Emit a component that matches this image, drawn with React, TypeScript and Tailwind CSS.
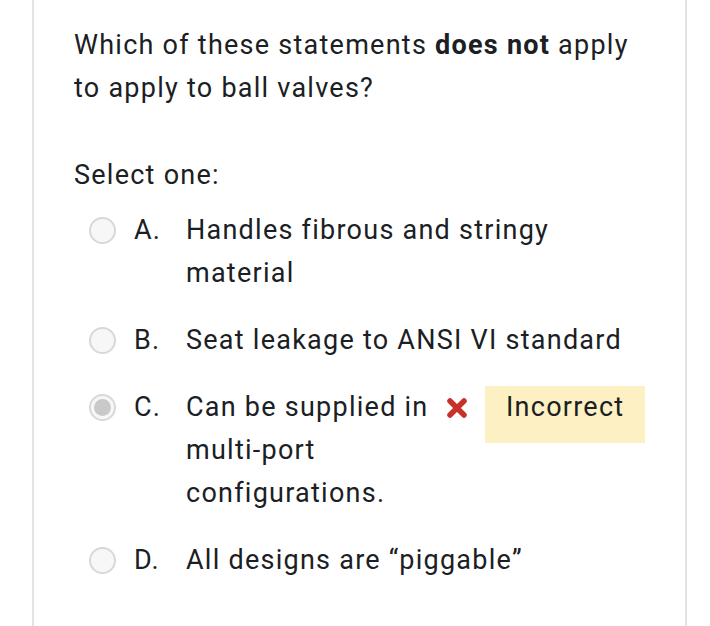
import React from "react";

function Radio({ checked }: { checked?: boolean }) {
  return (
    <div className="w-[27px] h-[27px] rounded-full border-2 border-[#d8d8d8] bg-[#f7f7f7] flex items-center justify-center shrink-0">
      {checked && <div className="w-[17px] h-[17px] rounded-full bg-[#c9c9c9]" />}
    </div>
  );
}

function Option({
  letter,
  children,
  checked,
  extra,
  textClass,
}: {
  letter: string;
  children: React.ReactNode;
  checked?: boolean;
  extra?: React.ReactNode;
  textClass?: string;
}) {
  return (
    <div className="flex items-start py-3">
      <div className="h-[43px] flex items-center w-[61px] pl-[16px] shrink-0">
        <Radio checked={checked} />
      </div>
      <div className="w-[52px] shrink-0">{letter}</div>
      <div className={textClass ?? "flex-1"}>{children}</div>
      {extra}
    </div>
  );
}

export default function App() {
  return (
    <div
      className="w-[710px] h-[626px] bg-white overflow-hidden text-[#1a2023]"
      style={{ fontFamily: "Roboto, 'Liberation Sans', sans-serif" }}
    >
      <div className="ml-[32px] w-[655px] h-full border-x-2 border-[#e3e3e3] pt-[24px] pl-[40px] pr-[30px] text-[27px] leading-[43px] tracking-[1.25px]">
        <p>
          Which of these statements <b className="font-bold">does not</b> apply to apply to ball valves?
        </p>
        <p className="mt-[44px]">Select one:</p>
        <div className="-ml-[1px]">
          <Option letter="A.">Handles fibrous and stringy material</Option>
          <Option letter="B.">Seat leakage to ANSI VI standard</Option>
          <Option
            letter="C."
            checked
            textClass="w-[252px] shrink-0"
            extra={
              <>
                <div className="h-[43px] flex items-center ml-[8px] shrink-0">
                  <svg width="22" height="22" viewBox="0 0 22 22">
                    <path d="M4 4 L18 18 M18 4 L4 18" stroke="#c8302a" strokeWidth="5.5" strokeLinecap="round" />
                  </svg>
                </div>
                <div className="ml-[17px] bg-[#fdf0c2] px-[21px] pb-[14px] shrink-0">Incorrect</div>
              </>
            }
          >
            Can be supplied in multi-port configurations.
          </Option>
          <Option letter="D.">All designs are “piggable”</Option>
        </div>
      </div>
    </div>
  );
}
